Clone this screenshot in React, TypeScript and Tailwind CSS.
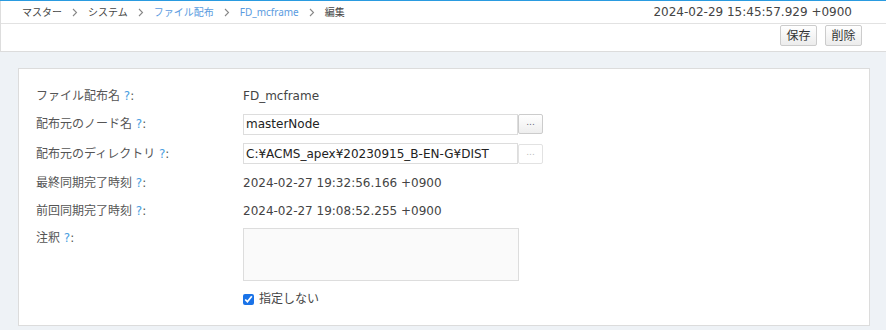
import React from "react";

const font = { fontFamily: '"DejaVu Sans", "Noto Sans CJK JP", sans-serif' };
const crumbFont = { fontFamily: '"Noto Sans", "Noto Sans CJK JP", sans-serif' };

function Help() {
  return <span className="text-[#4a9ee0]"> ?</span>;
}

function Row({ label, children, h }: { label: string; children?: React.ReactNode; h: string }) {
  return (
    <div className={`flex items-center ${h}`}>
      <div className="w-[207px] shrink-0 text-[#555]">
        {label}
        <Help />:
      </div>
      <div className="flex items-center text-[#444]">{children}</div>
    </div>
  );
}

function Chevron() {
  return (
    <svg width="6" height="9" viewBox="0 0 6 9" className="shrink-0">
      <path d="M1 1 L4.5 4.5 L1 8" fill="none" stroke="#888" strokeWidth="1.1" />
    </svg>
  );
}

export default function App() {
  return (
    <div className="w-[886px] h-[330px] overflow-hidden bg-[#eef2f6] text-[12px]" style={font}>
      <div className="h-px bg-[#2a9be0]" />
      <div className="bg-white border-l border-[#ddd]">
        <div className="h-[23px] flex items-center justify-between border-b border-[#e2e2e2] pl-[21px] pr-[34px]">
          <div className="flex items-center gap-[10px] text-[#444] text-[10px] pt-[1px]" style={crumbFont}>
            <span>マスター</span>
            <Chevron />
            <span>システム</span>
            <Chevron />
            <span className="text-[#5a9be0]">ファイル配布</span>
            <Chevron />
            <span className="text-[#5a9be0]">FD_mcframe</span>
            <Chevron />
            <span>編集</span>
          </div>
          <div className="text-[12px] text-[#444]">2024-02-29 15:45:57.929 +0900</div>
        </div>
        <div className="h-[28px] flex items-start justify-end gap-[8px] pr-[24px] pt-[1px] border-b border-[#dcdcdc]">
          <button className="w-[37px] h-[21px] border border-[#ccc] rounded-[2px] bg-gradient-to-b from-white to-[#ececec] text-[12px] text-[#333] leading-none">保存</button>
          <button className="w-[37px] h-[21px] border border-[#ccc] rounded-[2px] bg-gradient-to-b from-white to-[#ececec] text-[12px] text-[#333] leading-none">削除</button>
        </div>
      </div>
      <div className="pt-[16px] pl-[18px] pr-[16px]">
        <div className="bg-white border border-[#dcdcdc] h-[258px] pl-[17px] pt-[13px]">
          <Row label="ファイル配布名" h="h-[28px]">FD_mcframe</Row>
          <Row label="配布元のノード名" h="h-[28px]">
            <div className="w-[275px] h-[21px] border border-[#ddd] bg-white px-[2px] flex items-center text-[#222]">masterNode</div>
            <div className="w-[25px] h-[20px] border border-[#ccc] rounded-[2px] bg-gradient-to-b from-white to-[#eee] flex items-center justify-center text-[9px] text-[#667] leading-none pb-[3px]">...</div>
          </Row>
          <Row label="配布元のディレクトリ" h="h-[31px]">
            <div className="w-[275px] h-[21px] border border-[#ddd] bg-white px-[2px] flex items-center text-[#222]">C:¥ACMS_apex¥20230915_B-EN-G¥DIST</div>
            <div className="w-[25px] h-[20px] border border-[#e2e2e2] rounded-[2px] bg-white flex items-center justify-center text-[9px] text-[#bbb] leading-none pb-[3px]">...</div>
          </Row>
          <Row label="最終同期完了時刻" h="h-[28px]">2024-02-27 19:32:56.166 +0900</Row>
          <Row label="前回同期完了時刻" h="h-[28px]">2024-02-27 19:08:52.255 +0900</Row>
          <div className="flex pt-[3px]">
            <div className="w-[207px] shrink-0 text-[#555] pt-[1px]">
              注釈<Help />:
            </div>
            <div>
              <div className="w-[276px] h-[53px] border border-[#ddd] bg-[#fafafa]" />
              <label className="flex items-center gap-[5px] mt-[9px] text-[#444]">
                <input type="checkbox" defaultChecked className="w-[11px] h-[11px] m-0 accent-[#1a73e8]" />
                <span>指定しない</span>
              </label>
            </div>
          </div>
        </div>
      </div>
    </div>
  );
}
